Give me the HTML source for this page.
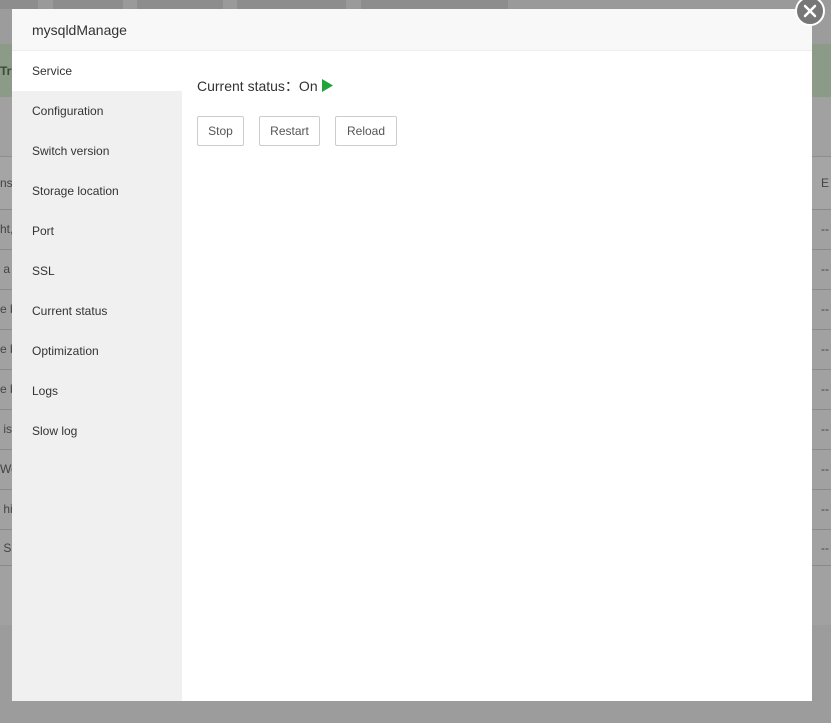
<!DOCTYPE html>
<html><head><meta charset="utf-8"><style>
*{margin:0;padding:0;box-sizing:border-box}
body{width:831px;height:723px;overflow:hidden;background:#9c9c9c;font-family:"Liberation Sans",sans-serif;position:relative}
.abs{position:absolute}
.tab{position:absolute;top:0;height:9px;background:#8d8d8d}
.row{position:absolute;left:0;width:831px;border-top:1px solid #8a8a8a}
.lt{position:absolute;left:0;font-size:12px;color:#444;line-height:14px}
.rt{position:absolute;left:821px;font-size:12px;color:#444;line-height:14px}
.modal{position:absolute;left:12px;top:9px;width:800px;height:692px;background:#fff}
.hd{height:42px;background:#f8f8f8;border-bottom:1px solid #eee;font-size:14px;color:#333;padding-left:20px;line-height:42px}
.side{position:absolute;left:0;top:42px;width:170px;bottom:0;background:#f0f0f0}
.side div{height:40px;line-height:40px;padding-left:20px;font-size:12px;color:#333}
.side div.on{background:#fff}
.btn{position:absolute;top:107px;height:30px;border:1px solid #ccc;border-radius:2px;font-size:12px;color:#555;text-align:center;line-height:28px;background:#fff}
.close{position:absolute;left:783px;top:-13px;width:30px;height:30px;border-radius:50%;background:#777;border:2px solid #fff}
</style></head><body>
<div class="abs" style="left:0;top:0;width:831px;height:9px;background:#9a9a9a"></div>
<div class="tab" style="left:0;width:38px"></div>
<div class="tab" style="left:53px;width:70px"></div>
<div class="tab" style="left:137px;width:86px"></div>
<div class="tab" style="left:237px;width:109px"></div>
<div class="tab" style="left:361px;width:147px"></div>
<div class="abs" style="left:0;top:44px;width:831px;height:53px;background:#8c9a88"></div>
<div class="abs" style="left:0;top:97px;width:831px;height:528px;background:#a1a1a1"></div>
<div class="abs" style="left:0;top:156px;width:831px;height:53px;background:#a5a5a5;border-top:1px solid #8e8e8e"></div>
<div class="row" style="top:209px"></div><div class="row" style="top:249px"></div><div class="row" style="top:289px"></div><div class="row" style="top:329px"></div><div class="row" style="top:369px"></div><div class="row" style="top:409px"></div><div class="row" style="top:449px"></div><div class="row" style="top:489px"></div><div class="row" style="top:529px"></div><div class="row" style="top:565px"></div>
<div class="abs" style="left:0;top:64px;font-size:12px;font-weight:bold;color:#3a4a35">Try</div>
<div class="lt" style="top:176px">ns</div>
<div class="lt" style="top:222px">ht,</div>
<div class="lt" style="top:262px">&nbsp;a</div>
<div class="lt" style="top:302px">e b</div>
<div class="lt" style="top:342px">e b</div>
<div class="lt" style="top:382px">e b</div>
<div class="lt" style="top:422px">&nbsp;is</div>
<div class="lt" style="top:462px">We</div>
<div class="lt" style="top:502px">&nbsp;hi</div>
<div class="lt" style="top:541px">&nbsp;S</div>
<div class="rt" style="top:176px">E</div>
<div class="rt" style="top:222px">--</div><div class="rt" style="top:262px">--</div><div class="rt" style="top:302px">--</div><div class="rt" style="top:342px">--</div><div class="rt" style="top:382px">--</div><div class="rt" style="top:422px">--</div><div class="rt" style="top:462px">--</div><div class="rt" style="top:502px">--</div><div class="rt" style="top:541px">--</div>
<div class="modal">
<div class="hd">mysqldManage</div>
<div class="side">
<div class="on">Service</div><div>Configuration</div><div>Switch version</div><div>Storage location</div><div>Port</div><div>SSL</div><div>Current status</div><div>Optimization</div><div>Logs</div><div>Slow log</div>
</div>
<div class="abs" style="left:185px;top:69px;font-size:14px;color:#333;line-height:16px">Current status：On <svg width="11" height="13" viewBox="0 0 11 13" style="vertical-align:-1px"><path d="M0 0L11 6.5L0 13Z" fill="#20a53a"/></svg></div>
<div class="btn" style="left:185px;width:47px">Stop</div>
<div class="btn" style="left:247px;width:61px">Restart</div>
<div class="btn" style="left:323px;width:62px">Reload</div>
<div class="close"><svg width="26" height="26" viewBox="0 0 26 26"><path d="M8 8L18 18M18 8L8 18" stroke="#fff" stroke-width="2.5" stroke-linecap="round"/></svg></div>
</div>
</body></html>
